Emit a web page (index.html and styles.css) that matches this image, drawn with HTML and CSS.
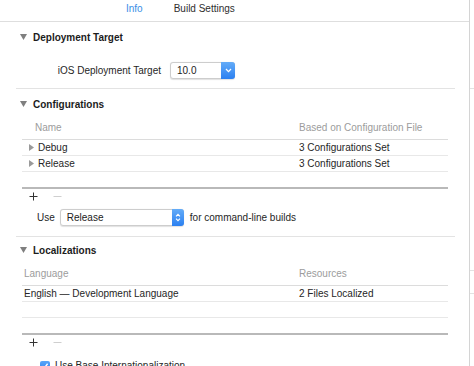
FILE: index.html
```html
<!DOCTYPE html>
<html>
<head>
<meta charset="utf-8">
<link rel="stylesheet" href="styles.css">
</head>
<body>
<div class="window">
  <div class="panel">
    <div class="tabs">
      <span class="tab tab-active">Info</span>
      <span class="tab">Build Settings</span>
    </div>

    <section class="section s-deploy">
      <div class="sec-head">
        <svg class="disc" width="7" height="6" viewBox="0 0 7 6"><polygon points="0,0 7,0 3.5,6" fill="#7f7f7f"/></svg>
        <span>Deployment Target</span>
      </div>
      <div class="field-row">
        <span class="field-label">iOS Deployment Target</span>
        <div class="popup popup-target">
          <span class="popup-text">10.0</span>
          <span class="popup-btn">
            <svg width="7" height="5" viewBox="0 0 7 5"><polyline points="1,1 3.5,3.6 6,1" fill="none" stroke="#fff" stroke-width="1.3"/></svg>
          </span>
        </div>
      </div>
    </section>

    <section class="section s-config">
      <div class="sec-head">
        <svg class="disc" width="7" height="6" viewBox="0 0 7 6"><polygon points="0,0 7,0 3.5,6" fill="#7f7f7f"/></svg>
        <span>Configurations</span>
      </div>
      <div class="table t-config">
        <div class="trow thead">
          <span class="cell c1">Name</span>
          <span class="cell c2">Based on Configuration File</span>
        </div>
        <div class="trow">
          <span class="cell c1"><svg class="rdisc" width="5" height="7" viewBox="0 0 5 7"><polygon points="0,0 5,3.5 0,7" fill="#9a9a9a"/></svg>Debug</span>
          <span class="cell c2">3 Configurations Set</span>
        </div>
        <div class="trow">
          <span class="cell c1"><svg class="rdisc" width="5" height="7" viewBox="0 0 5 7"><polygon points="0,0 5,3.5 0,7" fill="#9a9a9a"/></svg>Release</span>
          <span class="cell c2">3 Configurations Set</span>
        </div>
        <div class="trow tlast"></div>
      </div>
      <div class="pm-row">
        <svg width="9" height="9" viewBox="0 0 9 9"><path d="M4.5 0.5V8.5M0.5 4.5H8.5" stroke="#333" stroke-width="1"/></svg>
        <svg width="9" height="9" viewBox="0 0 9 9"><path d="M0.5 4.5H8.5" stroke="#cfcfcf" stroke-width="1"/></svg>
      </div>
      <div class="use-row">
        <span>Use</span>
        <div class="popup popup-use">
          <span class="popup-text">Release</span>
          <span class="popup-btn">
            <svg width="6" height="9" viewBox="0 0 6 9"><polyline points="1,3.3 3,1.3 5,3.3" fill="none" stroke="#fff" stroke-width="1.1"/><polyline points="1,5.7 3,7.7 5,5.7" fill="none" stroke="#fff" stroke-width="1.1"/></svg>
          </span>
        </div>
        <span class="use-after">for command-line builds</span>
      </div>
    </section>

    <section class="section s-loc">
      <div class="sec-head">
        <svg class="disc" width="7" height="6" viewBox="0 0 7 6"><polygon points="0,0 7,0 3.5,6" fill="#7f7f7f"/></svg>
        <span>Localizations</span>
      </div>
      <div class="table t-loc">
        <div class="trow thead">
          <span class="cell c1">Language</span>
          <span class="cell c2">Resources</span>
        </div>
        <div class="trow">
          <span class="cell c1">English — Development Language</span>
          <span class="cell c2">2 Files Localized</span>
        </div>
        <div class="trow"></div>
        <div class="trow tlast"></div>
      </div>
      <div class="pm-row">
        <svg width="9" height="9" viewBox="0 0 9 9"><path d="M4.5 0.5V8.5M0.5 4.5H8.5" stroke="#333" stroke-width="1"/></svg>
        <svg width="9" height="9" viewBox="0 0 9 9"><path d="M0.5 4.5H8.5" stroke="#cfcfcf" stroke-width="1"/></svg>
      </div>
      <div class="check-row">
        <span class="checkbox">
          <svg width="8" height="8" viewBox="0 0 8 8"><polyline points="1.5,4.2 3.3,6 6.6,1.8" fill="none" stroke="#fff" stroke-width="1.4"/></svg>
        </span>
        <span>Use Base Internationalization</span>
      </div>
    </section>
  </div>
  <div class="side">
    <div class="tick t1"></div>
    <div class="tick t2"></div>
    <div class="tick t3"></div>
  </div>
</div>
</body>
</html>
```

FILE: styles.css
```css
* {
  box-sizing: border-box;
  margin: 0;
  padding: 0;
}

body {
  font-family: "Liberation Sans", Arial, sans-serif;
  font-size: 10px;
  color: #262626;
  background: #fff;
  width: 474px;
  height: 366px;
  overflow: hidden;
}

.window {
  display: flex;
  height: 366px;
}

.panel {
  width: 470px;
  height: 366px;
  border-right: 1px solid #d4d4d4;
  overflow: hidden;
}

.tabs {
  height: 22px;
  border-bottom: 1px solid #dedede;
  display: flex;
  gap: 31px;
  padding-left: 126px;
  line-height: 18px;
}

.tab {
  color: #2e2e2e;
}

.tab-active {
  color: #3a8ee6;
}

.section {
  margin-left: 16px;
  width: 439px;
  border-bottom: 1px solid #e3e3e3;
}

.sec-head {
  display: flex;
  align-items: center;
  height: 12px;
  padding-left: 4px;
  gap: 6px;
  font-weight: bold;
  color: #1c1c1c;
}

.s-deploy {
  padding-top: 9px;
  padding-bottom: 9px;
}

.field-row {
  display: flex;
  align-items: center;
  margin-top: 19px;
  height: 17px;
}

.field-label {
  width: 154px;
  text-align: right;
  padding-right: 9px;
}

.popup {
  display: flex;
  align-items: center;
  height: 17px;
  background: #fff;
  border: 1px solid #cdcdcd;
  border-radius: 3px;
  box-shadow: 0 0.5px 1px rgba(0, 0, 0, 0.12);
}

.popup-text {
  flex: 1;
  padding-left: 6px;
  color: #222;
}

.popup-btn {
  display: flex;
  align-items: center;
  justify-content: center;
  align-self: stretch;
  margin: -1px -1px -1px 0;
  border-radius: 0 3px 3px 0;
  background: linear-gradient(#64acf8, #2b80f1);
}

.popup-target {
  width: 65px;
}

.popup-target .popup-btn {
  width: 14px;
}

.s-config {
  padding-top: 9px;
  padding-bottom: 10px;
}

.table {
  margin-left: 6px;
  width: 426px;
}

.trow {
  display: grid;
  grid-template-columns: 277px 1fr;
  height: 16px;
  border-bottom: 1px solid #e8e8e8;
  align-items: center;
  line-height: 12px;
}

.trow.thead {
  height: 30px;
  align-items: end;
  padding-bottom: 5px;
  color: #9c9c9c;
  border-bottom-color: #dcdcdc;
}

.trow.tlast {
  height: 17px;
  border-bottom: 2px solid #b9b9b9;
}

.t-config .thead .c1 {
  padding-left: 13px;
}

.t-config .c1 {
  display: flex;
  align-items: center;
  padding-left: 7px;
  gap: 4px;
}

.t-config .thead .c1 {
  display: block;
}

.t-loc .c1 {
  padding-left: 2px;
}

.pm-row {
  display: flex;
  align-items: center;
  height: 14px;
  padding-left: 13px;
  gap: 15px;
}

.use-row {
  display: flex;
  align-items: center;
  margin-top: 6px;
  height: 17px;
  padding-left: 21px;
}

.popup-use {
  width: 124px;
  margin-left: 5px;
}

.popup-use .popup-btn {
  width: 12px;
}

.use-after {
  margin-left: 6px;
}

.s-loc {
  padding-top: 7px;
  border-bottom: none;
}

.check-row {
  display: flex;
  align-items: center;
  gap: 5px;
  margin-top: 10px;
  height: 14px;
  padding-left: 24px;
  line-height: 14px;
}

.checkbox {
  width: 10px;
  height: 10px;
  border-radius: 2px;
  background: linear-gradient(#5aa6f8, #2c80f0);
  display: flex;
  align-items: center;
  justify-content: center;
}

.side {
  width: 4px;
}

.tick {
  border-bottom: 1px solid #e2e2e2;
}

.t1 {
  height: 89px;
}

.t2 {
  height: 182px;
}

.t3 {
  height: 23px;
}
```
